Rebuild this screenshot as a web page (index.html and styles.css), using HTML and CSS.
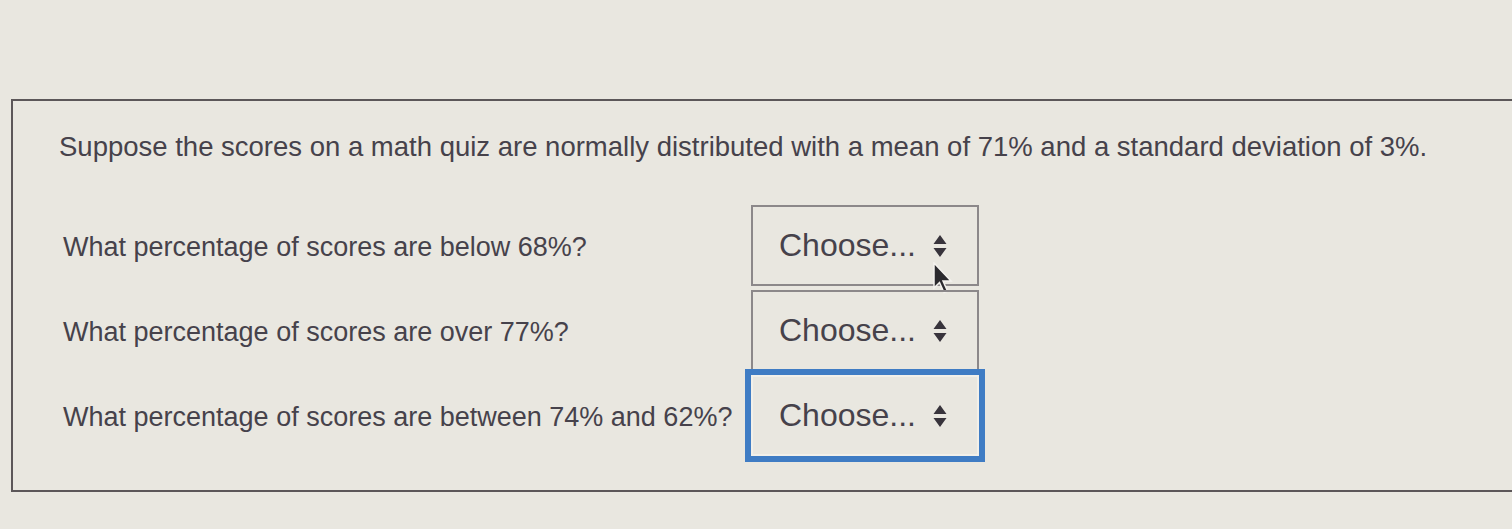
FILE: index.html
```html
<!DOCTYPE html>
<html lang="en">
<head>
    <meta charset="UTF-8">
    <title>Quiz</title>
    <link rel="stylesheet" href="styles.css">
</head>
<body>
    <div class="frame">
        <p class="intro">Suppose the scores on a math quiz are normally distributed with a mean of 71% and a standard deviation of 3%.</p>
        <div class="rows">
            <div class="row">
                <div class="label">What percentage of scores are below 68%?</div>
                <div class="select">
                    <span>Choose...</span>
                    <svg class="arrows" width="14" height="24" viewBox="0 0 14 24"><path d="M7 1 L13.5 10 H0.5 Z M7 23 L13.5 14 H0.5 Z" fill="#38343c"/></svg>
                    <svg class="cursor" width="24" height="34" viewBox="0 0 24 34"><path d="M2 1 L2 26 L7.5 20.5 L12 30.5 L15.5 29 L11 19 L19 19 Z" fill="#2b2a2e" stroke="#f4f2ee" stroke-width="1.5"/></svg>
                </div>
            </div>
            <div class="row">
                <div class="label">What percentage of scores are over 77%?</div>
                <div class="select">
                    <span>Choose...</span>
                    <svg class="arrows" width="14" height="24" viewBox="0 0 14 24"><path d="M7 1 L13.5 10 H0.5 Z M7 23 L13.5 14 H0.5 Z" fill="#38343c"/></svg>
                </div>
            </div>
            <div class="row">
                <div class="label">What percentage of scores are between 74% and 62%?</div>
                <div class="select focused">
                    <span>Choose...</span>
                    <svg class="arrows" width="14" height="24" viewBox="0 0 14 24"><path d="M7 1 L13.5 10 H0.5 Z M7 23 L13.5 14 H0.5 Z" fill="#38343c"/></svg>
                </div>
            </div>
        </div>
    </div>
</body>
</html>
```

FILE: styles.css
```css
:root {
    --bg: #e9e7e0;
    --text: #46424b;
    --frame-line: #5c5759;
    --box-line: #8c888a;
    --focus: #3f7cc4;
}
body {
    margin: 0;
    background-color: var(--bg);
    font-family: "Liberation Sans", Arial, sans-serif;
    color: var(--text);
    overflow: hidden;
}
.frame {
    margin: 99px 0 0 11px;
    border: 2px solid var(--frame-line);
    border-right: none;
    padding: 30px 0 34px 46px;
}
.intro {
    margin: 0;
    font-size: 27.5px;
    line-height: 32px;
}
.rows {
    margin-top: 42px;
    display: flex;
    flex-direction: column;
    gap: 4px;
}
.row {
    display: grid;
    grid-template-columns: 692px 228px;
    align-items: center;
}
.label {
    font-size: 27px;
    padding: 4px 0 0 4px;
}
.select {
    position: relative;
    height: 81px;
    box-sizing: border-box;
    border: 2px solid var(--box-line);
    display: flex;
    align-items: center;
    padding-left: 26px;
    font-size: 32px;
}
.select span {
    width: 154px;
}
.select.focused {
    outline: 6px solid var(--focus);
    outline-offset: 0;
    border-color: #f2f0ea;
}
.cursor {
    position: absolute;
    left: 179px;
    top: 55px;
}
```
